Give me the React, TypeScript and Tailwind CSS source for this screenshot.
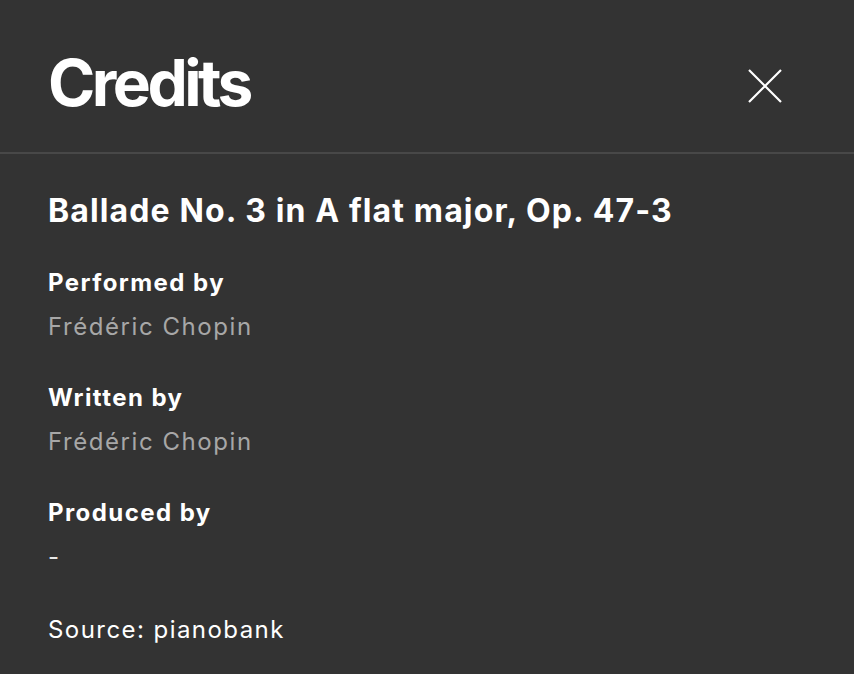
export default function App() {
  const credits = [
    { label: "Performed by", value: "Frédéric Chopin", muted: true },
    { label: "Written by", value: "Frédéric Chopin", muted: true },
    { label: "Produced by", value: "-", muted: false },
  ];

  return (
    <div
      className="min-h-screen w-full bg-[#333333] text-white"
      style={{ fontFamily: "Inter, 'Noto Sans', sans-serif" }}
    >
      <div className="flex h-[152px] items-start justify-between pl-[48px] pr-[72px]">
        <h1 className="pt-[51px] text-[64px] font-bold leading-none tracking-[-0.055em]">Credits</h1>
        <button className="mt-[69px] flex h-[34px] w-[34px] items-center justify-center" aria-label="Close">
          <svg viewBox="0 0 34 34" className="h-[34px] w-[34px]" fill="none" stroke="white" strokeWidth="2.2">
            <path d="M1 1L33 33M33 1L1 33" />
          </svg>
        </button>
      </div>
      <div className="h-[2px] bg-[#484848]" />

      <div className="px-[48px] pt-[35px]">
        <h2 className="text-[32px] font-bold leading-[43px] tracking-[0.035em]">
          Ballade No. 3 in A flat major, Op. 47-3
        </h2>

        <div className="mt-[29px] flex flex-col gap-[27px]">
          {credits.map((c) => (
            <div key={c.label} className="text-[24px] leading-[44px]">
              <p className="font-bold tracking-[0.06em]">{c.label}</p>
              <p className={c.muted ? "tracking-[0.065em] text-[#a7a7a7]" : "text-[#e8e8e8]"}>{c.value}</p>
            </div>
          ))}
          <p className="mt-[2px] text-[24px] leading-[44px] tracking-[0.06em]">Source: pianobank</p>
        </div>
      </div>
    </div>
  );
}
